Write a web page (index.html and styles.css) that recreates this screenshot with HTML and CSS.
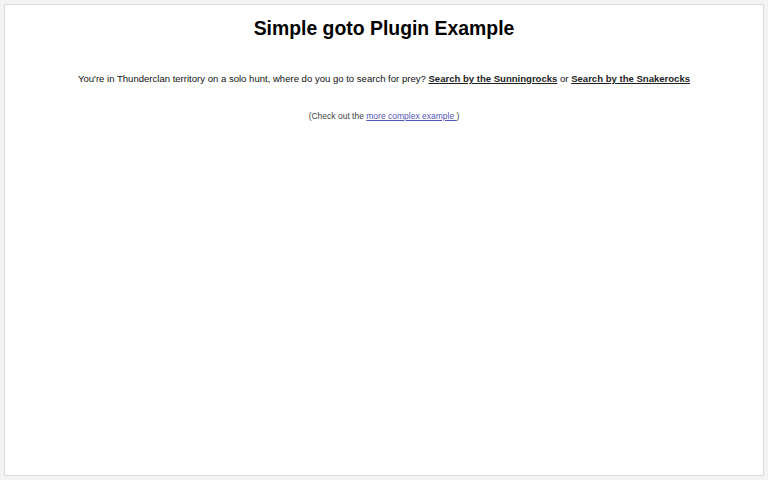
FILE: index.html
```html
<!DOCTYPE html>
<html lang="en">
<head>
	<meta charset="UTF-8">
	<title>Simple goto Plugin Example</title>
	<link rel="stylesheet" href="styles.css">
</head>
<body>
	<div class="page">
		<h1>Simple goto Plugin Example</h1>
		<p class="story">You're in Thunderclan territory on a solo hunt, where do you go to search for prey? <a href="#sunningrocks" class="choice">Search by the Sunningrocks</a> or <a href="#snakerocks" class="choice">Search by the Snakerocks</a></p>
		<p class="note">(Check out the <a href="#complex">more complex example </a>)</p>
	</div>
</body>
</html>
```

FILE: styles.css
```css
html, body {margin: 0;height: 100%;}
body {background: #f3f3f3;padding: 4px;box-sizing: border-box;font-family: "Liberation Sans", Arial, sans-serif;}
.page {background: #fff;border: 1px solid #ddd;height: 100%;box-sizing: border-box;text-align: center;}
h1 {font-size: 19.4px;font-weight: bold;margin: 12px 0 0;color: #000;}
.story {font-size: 9.55px;margin: 33px 0 0;color: #111;}
.story .choice {color: #222;font-weight: bold;}
.note {font-size: 8.5px;margin: 27px 0 0;color: #444;}
.note a {color: #5555bb;}
```
